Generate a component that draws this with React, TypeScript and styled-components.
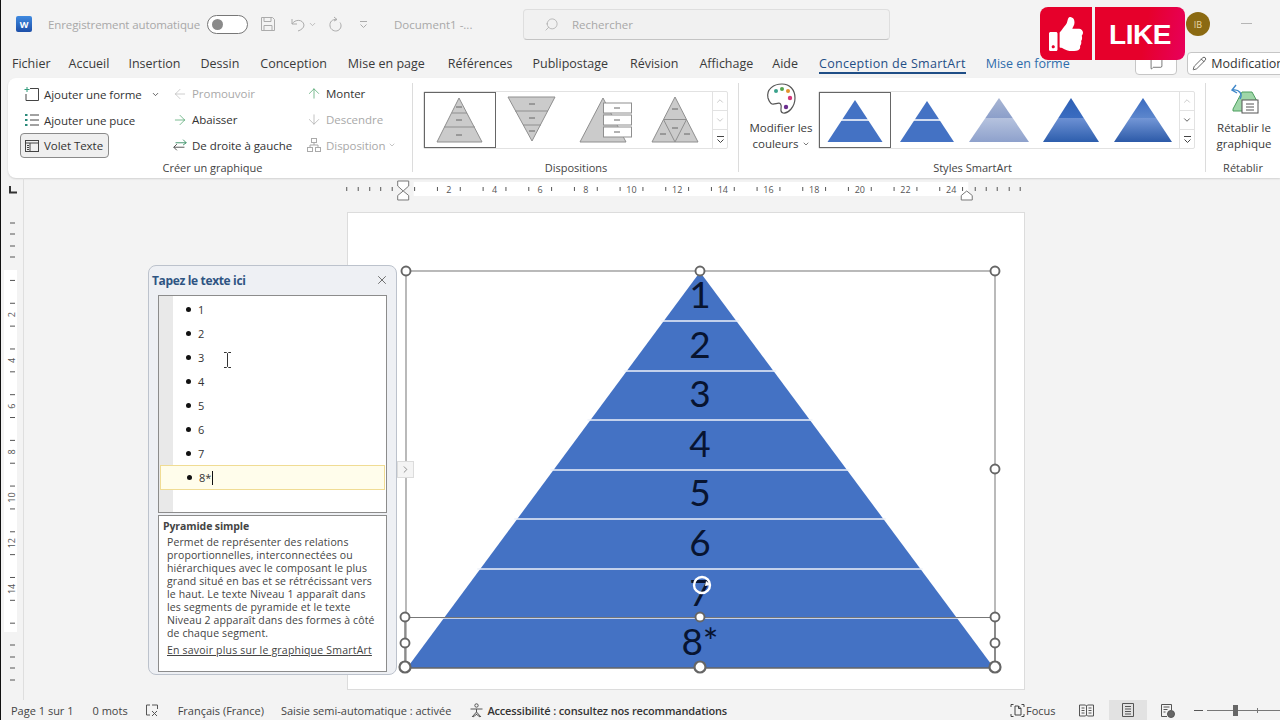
import React from "react";
import styled, { createGlobalStyle } from "styled-components";
import {
  ArrowDown,
  ArrowLeft,
  ArrowRight,
  ArrowUp,
  ChevronDown,
  ChevronRight,
  ChevronUp,
  MessageSquare,
  Pencil,
  Search,
  X,
} from "lucide-react";
import { FaThumbsUp } from "react-icons/fa";

const GlobalStyle = createGlobalStyle`
  html, body {
    margin: 0;
    padding: 0;
    background: #f3f3f3;
    overflow: hidden;
  }
  * {
    box-sizing: border-box;
  }
`;

const Window = styled.div`
  position: relative;
  width: 1280px;
  height: 720px;
  overflow: hidden;
  display: flex;
  flex-direction: column;
  background: #f3f3f3;
  border-left: 1px solid #111;
  font-family: "Open Sans", "Noto Sans", sans-serif;
  color: #333;
`;

/* title bar */
const TitleBar = styled.div`
  height: 40px;
  flex: none;
  display: flex;
  align-items: center;
  padding: 8px 0 0 15px;
  font-size: 11.5px;
  color: #a8a8a8;
`;

const WordIcon = styled.div`
  width: 16px;
  height: 16px;
  border-radius: 2px;
  background: linear-gradient(180deg, #3f8ae0, #1d4fa8);
  color: #fff;
  font-size: 9px;
  font-weight: 700;
  display: flex;
  align-items: center;
  justify-content: center;
`;

const AutoSave = styled.span`
  margin-left: 16px;
  width: 159px;
  letter-spacing: -0.1px;
`;

const Toggle = styled.div`
  width: 41px;
  height: 19px;
  border: 1px solid #777;
  border-radius: 10px;
  background: #fff;
  display: flex;
  align-items: center;
  padding-left: 4px;
  &::before {
    content: "";
    width: 11px;
    height: 11px;
    border-radius: 50%;
    background: #8a8a8a;
  }
`;

const QuickIcon = styled.span<{ $left: number }>`
  margin-left: ${(p) => p.$left}px;
  display: flex;
  color: #ababab;
`;

const DocName = styled.span`
  margin-left: 26px;
  width: 129px;
`;

const SearchBox = styled.div`
  width: 367px;
  height: 31px;
  border: 1px solid #dedede;
  border-bottom-color: #c4c4c4;
  border-radius: 4px;
  background: #f1f1f1;
  display: flex;
  align-items: center;
  gap: 13px;
  padding-left: 20px;
  font-size: 11.5px;
`;

const Avatar = styled.div`
  position: absolute;
  left: 1185px;
  top: 12px;
  width: 24px;
  height: 24px;
  border-radius: 50%;
  background: #8b6a12;
  color: #e8d9a8;
  font-size: 9px;
  display: flex;
  align-items: center;
  justify-content: center;
`;

const Minimize = styled.div`
  position: absolute;
  left: 1240px;
  top: 23px;
  width: 11px;
  height: 1px;
  background: #b5b5b5;
`;

const LikeBadge = styled.div`
  position: absolute;
  left: 1039px;
  top: 7px;
  height: 53px;
  display: flex;
  gap: 3px;
  color: #fff;
`;

const LikeThumb = styled.div`
  width: 52px;
  border-radius: 8px 0 0 8px;
  background: #e6002b;
  display: flex;
  align-items: center;
  justify-content: center;
`;

const LikeWord = styled.div`
  width: 90px;
  padding-top: 2px;
  border-radius: 0 8px 8px 0;
  background: linear-gradient(100deg, #e6002b 55%, #e8005c);
  font-family: "Liberation Sans", sans-serif;
  font-weight: 700;
  font-size: 28px;
  letter-spacing: -0.5px;
  display: flex;
  align-items: center;
  justify-content: center;
`;

/* tabs */
const TabBar = styled.div`
  height: 38px;
  flex: none;
  display: flex;
  align-items: center;
  padding: 8px 0 0 11px;
  font-size: 12.5px;
`;

const Tab = styled.span<{ $tone?: "active" | "context"; $gap: number }>`
  position: relative;
  margin-left: ${(p) => p.$gap}px;
  white-space: nowrap;
  color: ${(p) => (p.$tone === "active" ? "#1f4e86" : p.$tone === "context" ? "#2e6cab" : "#3a3a3a")};
  ${(p) =>
    p.$tone === "active" &&
    `letter-spacing: 0.3px;
    &::after {
      content: "";
      position: absolute;
      left: 0;
      right: 0;
      bottom: -2px;
      height: 2px;
      background: #1f4e86;
    }`}
`;

const TabActions = styled.div`
  margin-left: auto;
  margin-right: -9px;
  display: flex;
  gap: 10px;
`;

const TabButton = styled.div`
  height: 23px;
  border: 1px solid #c6c6c6;
  border-radius: 4px;
  background: #fff;
  display: flex;
  align-items: center;
  justify-content: center;
  gap: 4px;
  padding: 0 4px;
  min-width: 42px;
  white-space: nowrap;
`;

/* ribbon */
const Ribbon = styled.div`
  height: 100px;
  flex: none;
  margin-left: 7px;
  display: flex;
  background: #fff;
  border-radius: 8px 0 0 8px;
  box-shadow: 0 1px 2px rgba(0, 0, 0, 0.14);
  font-size: 11.5px;
`;

const Group = styled.div<{ $width: number; $last?: boolean }>`
  width: ${(p) => p.$width}px;
  flex: none;
  display: flex;
  flex-direction: column;
  position: relative;
  ${(p) =>
    !p.$last &&
    `&::after {
      content: "";
      position: absolute;
      right: 0;
      top: 5px;
      bottom: 6px;
      width: 1px;
      background: #dcdcdc;
    }`}
`;

const GroupBody = styled.div<{ $pad: string }>`
  height: 80px;
  display: flex;
  padding: ${(p) => p.$pad};
`;

const GroupLabel = styled.div<{ $shift?: number }>`
  height: 20px;
  padding-left: ${(p) => p.$shift ?? 0}px;
  text-align: center;
  font-size: 11px;
  color: #444;
  line-height: 20px;
`;

const CommandColumn = styled.div<{ $width: number }>`
  width: ${(p) => p.$width}px;
  display: flex;
  flex-direction: column;
`;

const Command = styled.div<{ $off?: boolean; $on?: boolean }>`
  height: ${(p) => (p.$on ? "25px" : "26px")};
  width: ${(p) => (p.$on ? "89px" : "auto")};
  display: flex;
  align-items: center;
  gap: 4px;
  padding-left: ${(p) => (p.$on ? "3px" : "4px")};
  white-space: nowrap;
  color: ${(p) => (p.$off ? "#a9a9a9" : "#333")};
  letter-spacing: -0.05px;
  ${(p) => p.$on && "background: #efefef; border: 1px solid #8a8a8a; border-radius: 4px;"}
`;

const IconSlot = styled.span<{ $color?: string }>`
  width: 16px;
  height: 16px;
  flex: none;
  display: flex;
  align-items: center;
  justify-content: center;
  color: ${(p) => p.$color ?? "#444"};
`;

const Gallery = styled.div<{ $width: number }>`
  width: ${(p) => p.$width}px;
  height: 58px;
  margin-top: 10px;
  display: flex;
  border: 1px solid #e2e2e2;
  border-radius: 2px;
`;

const GalleryItem = styled.div<{ $selected?: boolean }>`
  width: 72px;
  height: 56px;
  flex: none;
  ${(p) => p.$selected && "outline: 1.5px solid #666; outline-offset: -1px;"}
  svg {
    display: block;
  }
`;

const GalleryScroll = styled.div`
  margin-left: auto;
  width: 15px;
  display: flex;
  flex-direction: column;
  border-left: 1px solid #e2e2e2;
`;

const ScrollButton = styled.div<{ $off?: boolean }>`
  flex: 1;
  display: flex;
  align-items: center;
  justify-content: center;
  color: ${(p) => (p.$off ? "#c0c0c0" : "#444")};
  & + & {
    border-top: 1px solid #e2e2e2;
  }
`;

const BigCommand = styled.div<{ $width: number }>`
  width: ${(p) => p.$width}px;
  flex: none;
  display: flex;
  flex-direction: column;
  align-items: center;
  font-size: 11.5px;
  line-height: 16px;
  text-align: center;
  color: #3a3a3a;
  svg {
    flex: none;
  }
`;

const BigIcon = styled.div`
  height: 37px;
  margin-bottom: 2px;
`;

/* ruler */
const RulerRow = styled.div`
  height: 24px;
  flex: none;
  display: flex;
`;

const RulerCorner = styled.div`
  width: 23px;
  flex: none;
  border-right: 1px solid #dedede;
  display: flex;
  align-items: center;
  padding-left: 8px;
  svg {
    display: block;
  }
`;

/* workspace */
const Workspace = styled.div`
  position: relative;
  flex: 1;
  display: flex;
  min-height: 0;
`;

const VerticalRuler = styled.div`
  width: 23px;
  flex: none;
  border-right: 1px solid #dedede;
  svg {
    display: block;
  }
`;

const PageArea = styled.div`
  flex: 1;
  padding: 10px 0 10px 323px;
`;

const Page = styled.div`
  width: 678px;
  height: 478px;
  background: #fff;
  border: 1px solid #dcdcdc;
  svg {
    display: block;
    margin: -1px 0 0 0;
  }
`;

const TextPane = styled.div`
  position: absolute;
  left: 147px;
  top: 63px;
  width: 249px;
  height: 410px;
  border: 1px solid #bcc2cc;
  border-radius: 8px;
  background: #eef0f4;
  padding: 0 9px 2px 9px;
  display: flex;
  flex-direction: column;
`;

const PaneHeader = styled.div`
  height: 29px;
  flex: none;
  margin-left: -6px;
  padding-bottom: 1px;
  display: flex;
  align-items: center;
  justify-content: space-between;
  font-size: 12px;
  font-weight: 700;
  color: #2f5583;
  letter-spacing: -0.35px;
  svg {
    margin-right: -2px;
    color: #555;
  }
`;

const PaneEditor = styled.div`
  position: relative;
  height: 218px;
  flex: none;
  border: 1px solid #8c8c8c;
  background: linear-gradient(90deg, #e9e9e9 14px, #fff 14px);
  padding-top: 1px;
  display: flex;
  flex-direction: column;
`;

const BulletRow = styled.div<{ $current?: boolean }>`
  height: 24px;
  flex: none;
  display: flex;
  align-items: center;
  gap: 7px;
  padding-left: ${(p) => (p.$current ? "26px" : "27px")};
  font-size: 11px;
  color: #333;
  ${(p) =>
    p.$current &&
    "margin: 0 1px; height: 25px; background: #fffdeb; border: 1px solid #f0dc94;"}
  &::before {
    content: "";
    width: 5px;
    height: 5px;
    border-radius: 50%;
    background: #111;
  }
`;

const Caret = styled.span`
  display: inline-block;
  width: 1px;
  height: 14px;
  margin-left: 1px;
  background: #111;
  vertical-align: -3px;
`;

const BeamCursor = styled.svg`
  position: absolute;
  left: 64px;
  top: 56px;
`;

const PaneInfo = styled.div`
  margin-top: 2px;
  flex: 1;
  border: 1px solid #8c8c8c;
  background: #fff;
  padding: 3px 0 0 4px;
  font-size: 10.5px;
  color: #444;
`;

const InfoTitle = styled.div`
  font-weight: 700;
  line-height: 15px;
  letter-spacing: -0.1px;
  margin-bottom: 2px;
`;

const InfoLine = styled.div`
  margin-left: 4px;
  line-height: 13px;
  white-space: nowrap;
  letter-spacing: 0.12px;
`;

const InfoLink = styled.div`
  margin: 3px 0 0 4px;
  text-decoration: underline;
  white-space: nowrap;
  letter-spacing: 0.2px;
`;

const PaneTab = styled.div`
  position: absolute;
  left: 396px;
  top: 259px;
  width: 17px;
  height: 17px;
  background: #f4f4f4;
  border: 1px solid #dcdcdc;
  color: #888;
  display: flex;
  align-items: center;
  justify-content: center;
`;

/* status bar */
const StatusBar = styled.div`
  height: 20px;
  flex: none;
  display: flex;
  align-items: center;
  padding-left: 10px;
  font-size: 11px;
  color: #444;
`;

const StatusItem = styled.span<{ $left?: number; $strong?: boolean }>`
  margin-left: ${(p) => p.$left ?? 0}px;
  display: flex;
  align-items: center;
  white-space: nowrap;
  ${(p) => p.$strong && "font-weight: 600; color: #333; letter-spacing: -0.15px;"}
`;

const ViewButton = styled.span<{ $active?: boolean; $left?: number }>`
  margin-left: ${(p) => p.$left ?? 0}px;
  width: 38px;
  height: 20px;
  flex: none;
  display: flex;
  align-items: center;
  justify-content: center;
  ${(p) => p.$active && "background: #e2e2e2;"}
`;

const ZoomSlider = styled.div`
  position: relative;
  margin-left: 4px;
  width: 80px;
  height: 1px;
  flex: none;
  background: #777;
  &::before {
    content: "";
    position: absolute;
    left: 26px;
    top: -5px;
    width: 5px;
    height: 11px;
    background: #666;
  }
  &::after {
    content: "";
    position: absolute;
    left: 50px;
    top: -2px;
    width: 1px;
    height: 5px;
    background: #777;
  }
`;

const tabs = [
  { label: "Fichier", gap: 0 },
  { label: "Accueil", gap: 18 },
  { label: "Insertion", gap: 19 },
  { label: "Dessin", gap: 20 },
  { label: "Conception", gap: 21 },
  { label: "Mise en page", gap: 21 },
  { label: "Références", gap: 23 },
  { label: "Publipostage", gap: 20 },
  { label: "Révision", gap: 22 },
  { label: "Affichage", gap: 21 },
  { label: "Aide", gap: 19 },
];

const descLines = [
  "Permet de représenter des relations",
  "proportionnelles, interconnectées ou",
  "hiérarchiques avec le composant le plus",
  "grand situé en bas et se rétrécissant vers",
  "le haut. Le texte Niveau 1 apparaît dans",
  "les segments de pyramide et le texte",
  "Niveau 2 apparaît dans des formes à côté",
  "de chaque segment.",
];

const Dash = ({ x, y }: { x: number; y: number }) => (
  <line x1={x - 3} x2={x + 3} y1={y} y2={y} stroke="#666" strokeWidth="1" />
);

const gray = { fill: "#cbcbcb", stroke: "#8f8f8f", strokeWidth: 1 };

const LayoutThumb = ({ kind }: { kind: number }) => (
  <svg width="72" height="56" viewBox="0 0 72 56">
    {kind === 0 && (
      <>
        <polygon points="35,6 13,50 58,50" {...gray} />
        <line x1="28" x2="43" y1="21" y2="21" stroke="#8f8f8f" />
        <line x1="20" x2="51" y1="35" y2="35" stroke="#8f8f8f" />
        <Dash x={35} y={15} />
        <Dash x={35} y={28} />
        <Dash x={35} y={43} />
      </>
    )}
    {kind === 1 && (
      <>
        <polygon points="12,5 59,5 36,49" {...gray} />
        <line x1="19" x2="52" y1="19" y2="19" stroke="#8f8f8f" />
        <line x1="27" x2="45" y1="33" y2="33" stroke="#8f8f8f" />
        <Dash x={36} y={12} />
        <Dash x={36} y={26} />
        <Dash x={36} y={39} />
      </>
    )}
    {kind === 2 && (
      <>
        <polygon points="35,6 12,50 58,50" {...gray} />
        {[11, 23, 35].map((y) => (
          <g key={y}>
            <rect x="35.5" y={y} width="28" height="10" fill="#fff" stroke="#8f8f8f" />
            <Dash x={49} y={y + 5} />
          </g>
        ))}
      </>
    )}
    {kind === 3 && (
      <>
        <polygon points="35,5 12,50 58,50" {...gray} />
        <polygon points="23.5,27.5 46.5,27.5 35,50" fill="#cbcbcb" stroke="#8f8f8f" />
        <Dash x={35} y={17} />
        <Dash x={35} y={36} />
        <Dash x={23} y={42} />
        <Dash x={47} y={42} />
      </>
    )}
  </svg>
);

const StyleThumb = ({ kind }: { kind: number }) => {
  const id = `style-grad-${kind}`;
  const shades: Record<number, { half: number; stops: string[] }> = {
    2: { half: 30, stops: ["#a9b6d4", "#8c9fca", "#b5c2de", "#8ea1cc"] },
    3: { half: 28, stops: ["#2d5fb5", "#3a6cc0", "#6c90d3", "#2d5ead"] },
    4: { half: 29, stops: ["#3a6ac0", "#5c86cc", "#7396d6", "#2c5aa8"] },
  };
  if (kind < 2) {
    const half = kind === 0 ? 27.5 : 27;
    const apex = kind === 0 ? 8 : 9;
    return (
      <svg width="72" height="56" viewBox="0 0 72 56">
        <polygon points={`36,${apex} ${36 - half},50 ${36 + half},50`} fill="#4472c4" />
        <line x1="15" x2="57" y1="28" y2="28" stroke="#fff" strokeWidth="1.5" />
      </svg>
    );
  }
  const s = shades[kind];
  return (
    <svg width="72" height="56" viewBox="0 0 72 56">
      <defs>
        <linearGradient id={id} x1="0" y1="0" x2="0" y2="1">
          <stop offset="0" stopColor={s.stops[0]} />
          <stop offset="0.45" stopColor={s.stops[1]} />
          <stop offset="0.46" stopColor={s.stops[2]} />
          <stop offset="1" stopColor={s.stops[3]} />
        </linearGradient>
      </defs>
      <polygon points={`36,6 ${36 - s.half},50 ${36 + s.half},50`} fill={`url(#${id})`} />
    </svg>
  );
};

const PaletteIcon = () => (
  <svg width="34" height="36" viewBox="0 0 34 36">
    <path
      d="M4 17C2 8 10 3 18 3c8 0 13 6 13 14 0 9-7 16-12 15-4-1-1-5-2-8-1-4-6 0-9-1-2-1-3-3-4-6z"
      fill="#fff"
      stroke="#555"
      strokeWidth="1.2"
    />
    <circle cx="12" cy="10" r="2" fill="#3aa28c" />
    <circle cx="18" cy="8" r="2" fill="#55a44f" />
    <circle cx="24" cy="10" r="2" fill="#e3922b" />
    <circle cx="26" cy="17" r="2.2" fill="#d6377a" />
    <circle cx="22" cy="26" r="2.2" fill="#6b2f8f" />
  </svg>
);

const ResetIcon = () => (
  <svg width="34" height="36" viewBox="0 0 34 36">
    <polygon points="6,28 15,11 25,11 31,22 24,30 6,30" fill="#9fd6a8" stroke="#4d9e5f" />
    <rect x="15" y="19" width="16" height="13" fill="#fff" stroke="#555" />
    <path d="M19 23h8M19 26h8M19 29h8" stroke="#555" />
    <path d="M13 18c3-5-1-10-7-9M9 4L5 9l5 3" fill="none" stroke="#3f87c9" strokeWidth="1.4" />
  </svg>
);

const SaveIcon = () => (
  <svg width="16" height="16" viewBox="0 0 16 16" fill="none" stroke="currentColor">
    <path d="M1.500 1.500h11l2 2v11h-13z" />
    <path d="M4 1.500v4h7v-4M4 14.500v-5h8v5" />
  </svg>
);

const UndoIcon = () => (
  <svg width="16" height="16" viewBox="0 0 16 16" fill="none" stroke="currentColor">
    <path d="M2 3v5h5M2 8c3-5 11-5 12 1 0 3-3 5-6 6" />
  </svg>
);

const RedoIcon = () => (
  <svg width="16" height="16" viewBox="0 0 16 16" fill="none" stroke="currentColor">
    <path d="M6 1l3 2.500L6 5M9 3.500C4 3 1.500 6 2 10c.5 4 5 6 8 4.500 3-1.500 4-5 2-8" />
  </svg>
);

const MoreIcon = () => (
  <svg width="9" height="9" viewBox="0 0 9 9" fill="none" stroke="currentColor">
    <path d="M1 1.500h7M1.500 4.500l3 3 3-3" />
  </svg>
);

const AddShapeIcon = () => (
  <svg width="16" height="16" viewBox="0 0 16 16" fill="none">
    <path d="M6 2.500h8.500v12H2V8" stroke="#444" />
    <path d="M3 1v5M.5 3.500h5" stroke="#2f9a7a" />
  </svg>
);

const BulletIcon = () => (
  <svg width="16" height="16" viewBox="0 0 16 16" fill="none">
    <path d="M6 3h9M6 8h9M6 13h9" stroke="#444" />
    <path d="M1 3h2.500M1 8h2.500M1 13h2.500" stroke="#2b8a7a" strokeWidth="2" />
  </svg>
);

const PaneIcon = () => (
  <svg width="16" height="16" viewBox="0 0 16 16" fill="none" stroke="#444">
    <rect x="1.500" y="2.500" width="13" height="11" />
    <path d="M1.500 5h13M6 5v8.500M3 7.500h2M3 9.500h2M3 11.500h2" />
  </svg>
);

const SwapIcon = () => (
  <svg width="18" height="16" viewBox="0 0 18 16" fill="none" stroke="#444">
    <path d="M4 5.500h12M12.500 2L16 5.500 12.500 8" stroke="#2f8a5f" />
    <path d="M14 10.500H2M5.500 7L2 10.500 5.500 14" />
  </svg>
);

const OrgIcon = () => (
  <svg width="16" height="16" viewBox="0 0 16 16" fill="none" stroke="#aaa">
    <rect x="5.500" y="1.500" width="5" height="4" />
    <rect x="1.500" y="10.500" width="5" height="4" />
    <rect x="9.500" y="10.500" width="5" height="4" />
    <path d="M8 5.500V8M4 10.500V8h8v2.500" />
  </svg>
);

const HorizontalRuler = () => {
  const half: number[] = [];
  for (let i = 0; i < 25; i++) half.push(402.5 + (i + 0.5) * 22.85);
  const margins = [346, 357.5, 369, 380, 391.5, 975, 986, 997, 1009, 1020];
  const labels = Array.from({ length: 12 }, (_, i) => (i + 1) * 2);
  return (
    <svg width="1257" height="24" viewBox="23 0 1257 24" style={{ display: "block" }}>
      <rect x="413" y="4" width="555" height="14" fill="#fff" />
      {[...half, ...margins].map((x) => (
        <line key={x} x1={x} x2={x} y1="9" y2="13" stroke="#555" />
      ))}
      {labels.map((n) => (
        <text key={n} x={402.5 + n * 22.85} y="15" fontSize="9" textAnchor="middle" fill="#555">
          {n}
        </text>
      ))}
      <path d="M397 3h11v5l-5.500 5-5.500-5z" fill="#fff" stroke="#777" />
      <path d="M402.500 13l5.500 4.500v4.500h-11v-4.500z" fill="#fff" stroke="#777" />
      <path d="M961 22v-4.500l5.500-4.500 5.500 4.500V22z" fill="#fff" stroke="#777" />
    </svg>
  );
};

const SideRuler = () => {
  const ticks: number[] = [];
  for (let i = 0; i < 16; i++) ticks.push(269 + (i + 0.5) * 22.85);
  const margins = [223, 234, 246, 257, 645, 657, 668, 680];
  const labels = [2, 4, 6, 8, 10, 12, 14];
  return (
    <svg width="23" height="498" viewBox="0 202 23 498">
      <rect x="3" y="270" width="13" height="362" fill="#fff" />
      {[...ticks, ...margins].map((y) => (
        <line key={y} x1="9" x2="14" y1={y} y2={y} stroke="#555" />
      ))}
      {labels.map((n) => {
        const y = 269 + n * 22.85;
        return (
          <text
            key={n}
            x="11"
            y={y}
            fontSize="9"
            textAnchor="middle"
            fill="#555"
            transform={`rotate(-90 11 ${y}) translate(0 3)`}
          >
            {n}
          </text>
        );
      })}
    </svg>
  );
};

const Handle = ({ x, y, thick }: { x: number; y: number; thick?: boolean }) => (
  <circle cx={x} cy={y} r={thick ? 5.5 : 4.5} fill="#fff" stroke="#666" strokeWidth={thick ? 2.2 : 1.9} />
);

const digits = [
  { t: "1", y: 308 },
  { t: "2", y: 358 },
  { t: "3", y: 407 },
  { t: "4", y: 457 },
  { t: "5", y: 506 },
  { t: "6", y: 556 },
  { t: "7", y: 606 },
  { t: "8*", y: 655 },
];

const dividers = [321, 371, 420, 470, 519, 569, 618];

const SmartArt = () => (
  <svg width="678" height="478" viewBox="348 212 678 478">
    <rect x="406" y="271" width="589" height="396" fill="none" stroke="#8c8c8c" strokeWidth="1.2" />
    <polygon points="700,272 994,668 407,668" fill="#4472c4" />
    {dividers.map((y) => {
      const half = ((y - 272) * 293) / 396 + 3;
      return <line key={y} x1={700 - half} x2={700 + half} y1={y} y2={y} stroke="#eef2fa" strokeWidth="1.5" />;
    })}
    {digits.map((d) => (
      <text
        key={d.t}
        x="700"
        y={d.y}
        textAnchor="middle"
        fontSize="37"
        fontFamily="Lato, 'Open Sans', sans-serif"
        fill="#081430"
      >
        {d.t}
      </text>
    ))}
    <line x1="405" x2="995" y1="617.5" y2="617.5" stroke="#777" />
    <line x1="405" x2="405" y1="617" y2="668" stroke="#777" strokeWidth="1.4" />
    <line x1="995" x2="995" y1="617" y2="668" stroke="#777" strokeWidth="1.4" />
    <line x1="406" x2="995" y1="668" y2="668" stroke="#666" strokeWidth="1.4" />
    <circle cx="702" cy="585" r="8" fill="none" stroke="#fff" strokeWidth="2.4" />
    <path d="M706 581l5 4-6 1z" fill="#fff" />
    <Handle x={406} y={271} />
    <Handle x={700} y={271} />
    <Handle x={995} y={271} />
    <Handle x={995} y={469} />
    <Handle x={405} y={617} />
    <Handle x={700} y={617} />
    <Handle x={995} y={617} />
    <Handle x={405} y={643} />
    <Handle x={995} y={643} />
    <Handle x={405} y={667} thick />
    <Handle x={700} y={667} thick />
    <Handle x={995} y={667} thick />
  </svg>
);

const App: React.FC = () => {
  return (
    <Window>
      <GlobalStyle />
      <TitleBar>
        <WordIcon>W</WordIcon>
        <AutoSave>Enregistrement automatique</AutoSave>
        <Toggle />
        <QuickIcon $left={12}>
          <SaveIcon />
        </QuickIcon>
        <QuickIcon $left={14}>
          <UndoIcon />
        </QuickIcon>
        <QuickIcon $left={2}>
          <ChevronDown size={9} />
        </QuickIcon>
        <QuickIcon $left={11}>
          <RedoIcon />
        </QuickIcon>
        <QuickIcon $left={15}>
          <MoreIcon />
        </QuickIcon>
        <DocName>Document1 -...</DocName>
        <SearchBox>
          <Search size={15} strokeWidth={1.2} style={{ transform: "scaleX(-1)" }} />
          Rechercher
        </SearchBox>
      </TitleBar>

      <TabBar>
        {tabs.map((t) => (
          <Tab key={t.label} $gap={t.gap}>
            {t.label}
          </Tab>
        ))}
        <Tab $tone="active" $gap={21}>
          Conception de SmartArt
        </Tab>
        <Tab $tone="context" $gap={20}>
          Mise en forme
        </Tab>
        <TabActions>
          <TabButton>
            <MessageSquare size={13} strokeWidth={1.2} />
          </TabButton>
          <TabButton>
            <Pencil size={15} strokeWidth={1.2} />
            Modification
          </TabButton>
        </TabActions>
      </TabBar>

      <Ribbon>
        <Group $width={405}>
          <GroupBody $pad="3px 0 0 12px">
            <CommandColumn $width={148}>
              <Command>
                <IconSlot>
                  <AddShapeIcon />
                </IconSlot>
                Ajouter une forme
                <ChevronDown size={9} style={{ marginLeft: 5 }} />
              </Command>
              <Command>
                <IconSlot>
                  <BulletIcon />
                </IconSlot>
                Ajouter une puce
              </Command>
              <Command $on>
                <IconSlot>
                  <PaneIcon />
                </IconSlot>
                Volet Texte
              </Command>
            </CommandColumn>
            <CommandColumn $width={134}>
              <Command $off>
                <IconSlot $color="#b5b5b5">
                  <ArrowLeft size={16} strokeWidth={1} />
                </IconSlot>
                Promouvoir
              </Command>
              <Command>
                <IconSlot $color="#3a9a5c">
                  <ArrowRight size={16} strokeWidth={1} />
                </IconSlot>
                Abaisser
              </Command>
              <Command>
                <IconSlot>
                  <SwapIcon />
                </IconSlot>
                De droite à gauche
              </Command>
            </CommandColumn>
            <CommandColumn $width={100}>
              <Command>
                <IconSlot $color="#3a9a5c">
                  <ArrowUp size={17} strokeWidth={1} />
                </IconSlot>
                Monter
              </Command>
              <Command $off>
                <IconSlot $color="#a5a5a5">
                  <ArrowDown size={17} strokeWidth={1} />
                </IconSlot>
                Descendre
              </Command>
              <Command $off>
                <IconSlot>
                  <OrgIcon />
                </IconSlot>
                Disposition
                <ChevronDown size={8} style={{ marginLeft: -2 }} />
              </Command>
            </CommandColumn>
          </GroupBody>
          <GroupLabel $shift={4}>Créer un graphique</GroupLabel>
        </Group>

        <Group $width={326}>
          <GroupBody $pad="3px 0 0 10px">
            <Gallery $width={305}>
              {[0, 1, 2, 3].map((k) => (
                <GalleryItem key={k} $selected={k === 0}>
                  <LayoutThumb kind={k} />
                </GalleryItem>
              ))}
              <GalleryScroll>
                <ScrollButton $off>
                  <ChevronUp size={10} />
                </ScrollButton>
                <ScrollButton $off>
                  <ChevronDown size={10} />
                </ScrollButton>
                <ScrollButton>
                  <MoreIcon />
                </ScrollButton>
              </GalleryScroll>
            </Gallery>
          </GroupBody>
          <GroupLabel>Dispositions</GroupLabel>
        </Group>

        <Group $width={467}>
          <GroupBody $pad="3px 0 0 5px">
            <BigCommand $width={74}>
              <BigIcon>
                <PaletteIcon />
              </BigIcon>
              <span>Modifier les</span>
              <span>
                couleurs <ChevronDown size={8} />
              </span>
            </BigCommand>
            <Gallery $width={377}>
              {[0, 1, 2, 3, 4].map((k) => (
                <GalleryItem key={k} $selected={k === 0}>
                  <StyleThumb kind={k} />
                </GalleryItem>
              ))}
              <GalleryScroll>
                <ScrollButton $off>
                  <ChevronUp size={10} />
                </ScrollButton>
                <ScrollButton>
                  <ChevronDown size={10} />
                </ScrollButton>
                <ScrollButton>
                  <MoreIcon />
                </ScrollButton>
              </GalleryScroll>
            </Gallery>
          </GroupBody>
          <GroupLabel>Styles SmartArt</GroupLabel>
        </Group>

        <Group $width={74} $last>
          <GroupBody $pad="3px 0 0 0">
            <BigCommand $width={76}>
              <BigIcon>
                <ResetIcon />
              </BigIcon>
              <span>Rétablir le</span>
              <span>graphique</span>
            </BigCommand>
          </GroupBody>
          <GroupLabel>Rétablir</GroupLabel>
        </Group>
      </Ribbon>

      <RulerRow>
        <RulerCorner>
          <svg width="8" height="8" viewBox="0 0 8 8">
            <path d="M1 0v6.500h7" fill="none" stroke="#333" strokeWidth="2" />
          </svg>
        </RulerCorner>
        <HorizontalRuler />
      </RulerRow>

      <Workspace>
        <VerticalRuler>
          <SideRuler />
        </VerticalRuler>
        <PageArea>
          <Page>
            <SmartArt />
          </Page>
        </PageArea>
        <TextPane>
          <PaneHeader>
            Tapez le texte ici
            <X size={14} strokeWidth={1.4} />
          </PaneHeader>
          <PaneEditor>
            {["1", "2", "3", "4", "5", "6", "7"].map((n) => (
              <BulletRow key={n}>{n}</BulletRow>
            ))}
            <BulletRow $current>
              <span>
                8*
                <Caret />
              </span>
            </BulletRow>
            <BeamCursor width="9" height="16" viewBox="0 0 9 16" fill="none" stroke="#333">
              <path d="M1 .5h2.500l1 1 1-1H8M4.500 1.500v13M1 15.500h2.500l1-1 1 1H8" />
            </BeamCursor>
          </PaneEditor>
          <PaneInfo>
            <InfoTitle>Pyramide simple</InfoTitle>
            {descLines.map((l) => (
              <InfoLine key={l}>{l}</InfoLine>
            ))}
            <InfoLink>En savoir plus sur le graphique SmartArt</InfoLink>
          </PaneInfo>
        </TextPane>
        <PaneTab>
          <ChevronRight size={11} />
        </PaneTab>
      </Workspace>

      <StatusBar>
        <StatusItem>Page 1 sur 1</StatusItem>
        <StatusItem $left={19}>0 mots</StatusItem>
        <StatusItem $left={17}>
          <svg width="14" height="14" viewBox="0 0 14 14" fill="none" stroke="#555">
            <path d="M5 2H1.500v10H5M7 2h5.500v4M7 8l5 5M12 8l-5 5" />
          </svg>
        </StatusItem>
        <StatusItem $left={19}>Français (France)</StatusItem>
        <StatusItem $left={17}>Saisie semi-automatique : activée</StatusItem>
        <StatusItem $left={18} $strong>
          <svg width="15" height="15" viewBox="0 0 15 15" fill="none" stroke="#555" style={{ marginRight: 3 }}>
            <circle cx="7.500" cy="2.500" r="1.700" />
            <path d="M1.500 6h12M7.500 6v3M3 14l4.500-5 4.500 5M7 11l4 3M8 11l-4 3" />
          </svg>
          Accessibilité : consultez nos recommandations
        </StatusItem>
        <StatusItem $left={283}>
          <svg width="15" height="15" viewBox="0 0 15 15" fill="none" stroke="#444" style={{ marginRight: 1 }}>
            <path d="M1 4V1.500h2.500M14 4V1.500h-2.500M1 11v2.500h2.500M14 11v2.500h-2.500M5 3h3.500L11 5.500V12H5zM8.500 3v2.500H11" />
          </svg>
          Focus
        </StatusItem>
        <ViewButton $left={12}>
          <svg width="15" height="13" viewBox="0 0 15 13" fill="none" stroke="#555">
            <path d="M.5 1h6l1 1 1-1h6v11h-6l-1-1-1 1h-6zM7.500 2v9M2.500 4h3M2.500 6.500h3M2.500 9h3M9.500 4h3M9.500 6.500h3M9.500 9h3" />
          </svg>
        </ViewButton>
        <ViewButton $active $left={3}>
          <svg width="12" height="14" viewBox="0 0 12 14" fill="none" stroke="#555">
            <path d="M.5.500h11v13H.5zM3 3.500h6M3 6h6M3 8.500h6M3 11h6" />
          </svg>
        </ViewButton>
        <ViewButton $left={2}>
          <svg width="15" height="15" viewBox="0 0 15 15" fill="none" stroke="#555">
            <path d="M7 13.500H1.500v-12h10V7M3.500 4h6M3.500 6.500h4M3.500 9h2" />
            <circle cx="11" cy="11" r="3.500" fill="#666" />
          </svg>
        </ViewButton>
        <StatusItem $left={7}>
          <svg width="9" height="3" viewBox="0 0 9 3">
            <path d="M0 1.500h9" stroke="#555" />
          </svg>
        </StatusItem>
        <ZoomSlider />
      </StatusBar>

      <Minimize />
      <Avatar>IB</Avatar>
      <LikeBadge>
        <LikeThumb>
          <FaThumbsUp size={34} />
        </LikeThumb>
        <LikeWord>LIKE</LikeWord>
      </LikeBadge>
    </Window>
  );
};

export default App;
